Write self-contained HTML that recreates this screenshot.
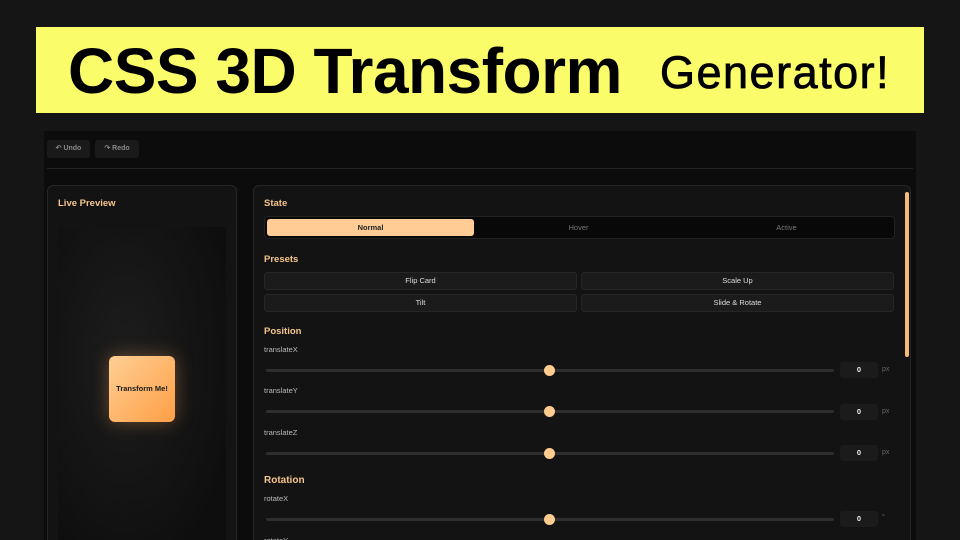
<!DOCTYPE html>
<html><head><style>
*{margin:0;padding:0;box-sizing:border-box}
html,body{width:960px;height:540px;overflow:hidden}
body{background:#151515;font-family:"Liberation Sans",sans-serif;position:relative;color:#ddd}
.ban{position:absolute;left:36px;top:27px;width:888px;height:86px;background:#fbfc6a;color:#000;font-weight:bold;white-space:nowrap;line-height:86px}
.ban .a{position:absolute;left:32px;top:1px;font-size:64px;letter-spacing:-0.5px}.ban .b{position:absolute;left:624px;top:3px;font-size:45px;letter-spacing:1.5px;font-weight:normal;-webkit-text-stroke:0.8px #000}
.main{position:absolute;left:44px;top:131px;width:872px;height:420px;background:#0c0c0c}
.btn{position:absolute;top:9px;height:18px;background:#1a1a1a;border-radius:3px;font-size:7px;color:#888;line-height:18px;text-align:center;font-weight:bold}
.hr{position:absolute;left:3px;right:3px;top:37px;height:1px;background:#252525}
.panel{position:absolute;background:#131313;border:1px solid #262626;border-radius:6px}
h3{position:absolute;font-size:9.5px;color:#f6c58c;font-weight:bold}
.seg{position:absolute;left:10px;top:30px;width:631px;height:23px;background:#080808;border:1px solid #222;border-radius:4px}
.seg div{position:absolute;top:2px;height:17px;width:207px;font-size:7.5px;line-height:17px;text-align:center;color:#777}
.pb{position:absolute;height:18px;width:313px;background:#1b1b1b;border:1px solid #262626;border-radius:3px;font-size:7.5px;line-height:16px;text-align:center;color:#ddd}
.lbl{position:absolute;left:10px;font-size:7.5px;color:#bbb}
.tr{position:absolute;left:12px;width:568px;height:3px;background:#2e2e2e;border-radius:2px}
.th{position:absolute;left:278px;top:-4px;width:11px;height:11px;border-radius:50%;background:#ffcc8f}
.num{position:absolute;left:586px;width:38px;height:16px;background:#1b1b1b;border-radius:3px;font-size:7.5px;font-weight:bold;text-align:center;line-height:16px;color:#eee}
.u{position:absolute;left:628px;font-size:7px;color:#666}
</style></head><body>
<div class="ban"><span class="a">CSS 3D Transform</span><span class="b">Generator!</span></div>
<div class="main">
<div class="btn" style="left:3px;width:43px">↶ Undo</div>
<div class="btn" style="left:51px;width:44px">↷ Redo</div>
<div class="hr"></div>
</div>
<div class="panel" style="left:47px;top:185px;width:190px;height:370px">
<h3 style="left:10px;top:12px">Live Preview</h3>
<div style="position:absolute;left:10px;top:41px;width:168px;height:330px;background:radial-gradient(ellipse at 40% 40%,#1d1d1d,#0e0e0e 80%)"></div>
<div style="position:absolute;left:61px;top:170px;width:66px;height:66px;border-radius:6px;background:linear-gradient(135deg,#ffcf95,#ff9f45);box-shadow:0 0 18px rgba(255,170,90,.35);color:#1a1a1a;font-size:7.5px;font-weight:bold;text-align:center;line-height:66px">Transform Me!</div>
</div>
<div class="panel" style="left:253px;top:185px;width:658px;height:370px">
<div style="position:absolute;left:651px;top:6px;width:4px;height:165px;background:#f5b97a;border-radius:2px"></div>
<h3 style="left:10px;top:12px">State</h3>
<div class="seg"><div style="left:2px;background:#ffcc95;color:#222;font-weight:bold;border-radius:3px">Normal</div><div style="left:210px">Hover</div><div style="left:418px">Active</div></div>
<h3 style="left:10px;top:68px">Presets</h3>
<div class="pb" style="left:10px;top:86px">Flip Card</div>
<div class="pb" style="left:327px;top:86px">Scale Up</div>
<div class="pb" style="left:10px;top:108px">Tilt</div>
<div class="pb" style="left:327px;top:108px">Slide &amp; Rotate</div>
<h3 style="left:10px;top:140px">Position</h3>
<div class="lbl" style="top:159px">translateX</div><div class="tr" style="top:183px"><div class="th"></div></div><div class="num" style="top:176px">0</div><div class="u" style="top:180px">px</div>
<div class="lbl" style="top:200px">translateY</div><div class="tr" style="top:224px"><div class="th"></div></div><div class="num" style="top:218px">0</div><div class="u" style="top:222px">px</div>
<div class="lbl" style="top:242px">translateZ</div><div class="tr" style="top:266px"><div class="th"></div></div><div class="num" style="top:259px">0</div><div class="u" style="top:263px">px</div>
<h3 style="left:10px;top:289px;font-size:10px">Rotation</h3>
<div class="lbl" style="top:308px">rotateX</div><div class="tr" style="top:332px"><div class="th"></div></div><div class="num" style="top:325px">0</div><div class="u" style="top:328px">°</div>
<div class="lbl" style="top:350px">rotateY</div>
</div>
</body></html>
